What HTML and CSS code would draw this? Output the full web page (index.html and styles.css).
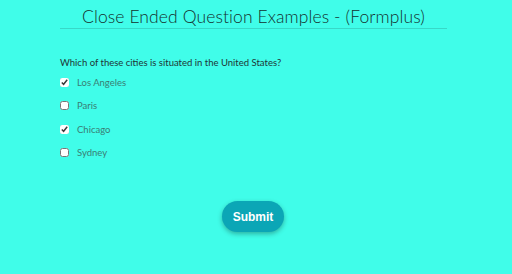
FILE: index.html
```html
<!DOCTYPE html>
<html>
<head>
<meta charset="utf-8">
<link rel="stylesheet" href="styles.css">
</head>
<body>
<div class="page">
  <h1 class="title">Close Ended Question Examples - (Formplus)</h1>
  <div class="form">
    <p class="question">Which of these cities is situated in the United States?</p>
    <label class="option"><input type="checkbox" checked><span>Los Angeles</span></label>
    <label class="option"><input type="checkbox"><span>Paris</span></label>
    <label class="option"><input type="checkbox" checked><span>Chicago</span></label>
    <label class="option"><input type="checkbox"><span>Sydney</span></label>
  </div>
  <div class="actions"><button class="submit">Submit</button></div>
</div>
</body>
</html>
```
FILE: styles.css
```css
html, body {
  margin: 0;
  padding: 0;
  background: #40fde9;
  width: 512px;
  height: 274px;
  overflow: hidden;
}
.page {
  font-family: "Lato", "Open Sans", sans-serif;
  display: flex;
  flex-direction: column;
}
.title {
  margin: 0 65px 0 60px;
  padding-top: 6px;
  height: 22px;
  border-bottom: 1px solid #38d8c8;
  font-size: 17.5px;
  font-weight: 300;
  color: #15302e;
  text-align: center;
  line-height: 22px;
  letter-spacing: 0.1px;
}
.form {
  margin: 28px 0 0 60px;
  display: flex;
  flex-direction: column;
}
.question {
  margin: 0 0 2px 0;
  font-size: 9.5px;
  font-weight: 400;
  color: #1f3535;
  line-height: 12px;
}
.option {
  display: flex;
  align-items: center;
  height: 23.3px;
  font-size: 9.5px;
  color: #3a7d74;
}
.option input {
  margin: 0 8px 0 0;
  width: 9px;
  height: 9px;
  accent-color: #ffffff;
}
.actions {
  display: flex;
  justify-content: center;
  padding-top: 37px;
}
.submit {
  width: 62px;
  height: 31px;
  border: none;
  border-radius: 16px;
  background: #0ba6b6;
  color: #ffffff;
  font-family: "Liberation Sans", Arial, sans-serif;
  font-size: 12px;
  font-weight: bold;
  box-shadow: 0 2px 5px rgba(0,0,0,0.3);
  margin-right: 6px;
}
```
